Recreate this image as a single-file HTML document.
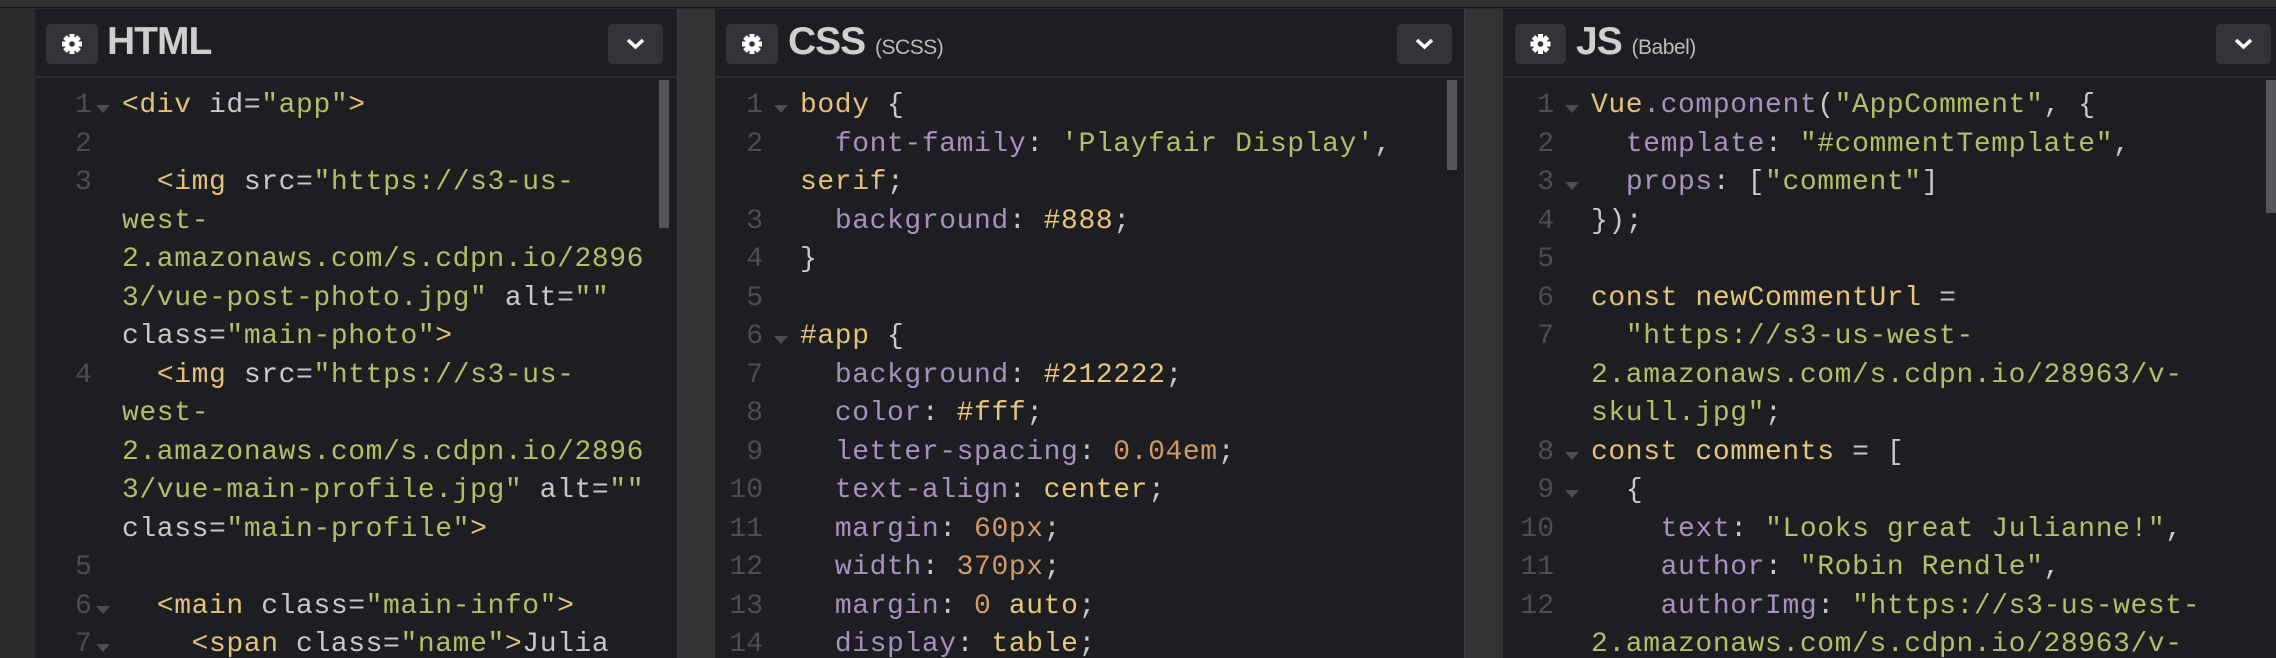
<!DOCTYPE html>
<html><head><meta charset="utf-8"><style>
*{margin:0;padding:0;box-sizing:border-box}
body{width:2276px;height:658px;overflow:hidden;background:#2b2b2e;position:relative;font-family:"Liberation Sans",sans-serif}
.top{position:absolute;left:0;top:0;width:2276px;height:8px;background:#333336;border-bottom:1px solid #111}
.panel{position:absolute;top:9px;height:649px;background:#1d1e22;overflow:hidden}
.div{position:absolute;top:9px;height:649px;background:#333336;border-left:1px solid #3c3c40}
.hdr{position:absolute;left:0;right:0;top:0;height:69px;border-bottom:2px solid #2a2b2f}
.btn{position:absolute;top:15px;height:40px;background:#333438;border-radius:5px}
.title{position:absolute;top:11px;color:#cfcfcf;font-weight:bold;font-size:39px;letter-spacing:-1px}
.title small{font-weight:normal;font-size:21px;letter-spacing:-0.5px;color:#bbb}
.code{position:absolute;top:78px;left:0;right:0;font-family:"Liberation Mono",monospace;font-size:28px;letter-spacing:0.6px;line-height:38.5px}
.row{height:38.5px;white-space:pre;position:relative}
.ln{position:absolute;text-align:right;color:#4d4d52;letter-spacing:0}
.fold{position:absolute;top:18px;width:0;height:0;border-left:7px solid transparent;border-right:7px solid transparent;border-top:8px solid #4d4d52}
.t{color:#e5c07b}.a{color:#c8c8c8}.s{color:#b5bd68}.p{color:#a890c0}.n{color:#d19a66}.w{color:#c8c8c8}.y{color:#e8c57d}
.sb{position:absolute;width:10px;background:#56565a}
</style></head><body>
<div class="top"></div>

<!-- panel 1 -->
<div class="panel" style="left:35px;width:642px">
 <div class="hdr">
  <div class="btn" style="left:11px;width:52px"><svg width="52" height="40" viewBox="0 0 52 40"><g transform="translate(26,20)" fill="#fff"><circle r="7"/><g id="t"><rect x="-2.5" y="-10" width="5" height="20"/><rect x="-2.5" y="-10" width="5" height="20" transform="rotate(45)"/><rect x="-2.5" y="-10" width="5" height="20" transform="rotate(90)"/><rect x="-2.5" y="-10" width="5" height="20" transform="rotate(135)"/></g><circle r="2.8" fill="#333438"/></g></svg></div>
  <div class="title" style="left:72px">HTML</div>
  <div class="btn" style="left:573px;width:55px"><svg width="55" height="40" viewBox="0 0 55 40"><path d="M20 16 L27.5 23 L35 16" stroke="#fff" stroke-width="3.5" fill="none"/></svg></div>
 </div>
 <div class="sb" style="left:624px;top:71px;height:148px"></div>
 <div class="code" style="padding-left:87px">
  <div class="row"><span class="ln" style="left:-47px;width:10px">1</span><span class="fold" style="left:-26px"></span><span class="t">&lt;div</span> <span class="a">id=</span><span class="s">"app"</span><span class="t">&gt;</span></div>
  <div class="row"><span class="ln" style="left:-47px;width:10px">2</span></div>
  <div class="row"><span class="ln" style="left:-47px;width:10px">3</span>  <span class="t">&lt;img</span> <span class="a">src=</span><span class="s">"https://s3-us-</span></div>
  <div class="row"><span class="s">west-</span></div>
  <div class="row"><span class="s">2.amazonaws.com/s.cdpn.io/2896</span></div>
  <div class="row"><span class="s">3/vue-post-photo.jpg"</span> <span class="a">alt=</span><span class="s">""</span></div>
  <div class="row"><span class="a">class=</span><span class="s">"main-photo"</span><span class="t">&gt;</span></div>
  <div class="row"><span class="ln" style="left:-47px;width:10px">4</span>  <span class="t">&lt;img</span> <span class="a">src=</span><span class="s">"https://s3-us-</span></div>
  <div class="row"><span class="s">west-</span></div>
  <div class="row"><span class="s">2.amazonaws.com/s.cdpn.io/2896</span></div>
  <div class="row"><span class="s">3/vue-main-profile.jpg"</span> <span class="a">alt=</span><span class="s">""</span></div>
  <div class="row"><span class="a">class=</span><span class="s">"main-profile"</span><span class="t">&gt;</span></div>
  <div class="row"><span class="ln" style="left:-47px;width:10px">5</span></div>
  <div class="row"><span class="ln" style="left:-47px;width:10px">6</span><span class="fold" style="left:-26px"></span>  <span class="t">&lt;main</span> <span class="a">class=</span><span class="s">"main-info"</span><span class="t">&gt;</span></div>
  <div class="row"><span class="ln" style="left:-47px;width:10px">7</span><span class="fold" style="left:-26px"></span>    <span class="t">&lt;span</span> <span class="a">class=</span><span class="s">"name"</span><span class="t">&gt;</span><span class="a">Julia</span></div>
 </div>
</div>
<div class="div" style="left:677px;width:38px"></div>

<!-- panel 2 -->
<div class="panel" style="left:715px;width:749px">
 <div class="hdr">
  <div class="btn" style="left:11px;width:52px"><svg width="52" height="40" viewBox="0 0 52 40"><g transform="translate(26,20)" fill="#fff"><circle r="7"/><rect x="-2.5" y="-10" width="5" height="20"/><rect x="-2.5" y="-10" width="5" height="20" transform="rotate(45)"/><rect x="-2.5" y="-10" width="5" height="20" transform="rotate(90)"/><rect x="-2.5" y="-10" width="5" height="20" transform="rotate(135)"/><circle r="2.8" fill="#333438"/></g></svg></div>
  <div class="title" style="left:73px">CSS <small>(SCSS)</small></div>
  <div class="btn" style="left:682px;width:55px"><svg width="55" height="40" viewBox="0 0 55 40"><path d="M20 16 L27.5 23 L35 16" stroke="#fff" stroke-width="3.5" fill="none"/></svg></div>
 </div>
 <div class="sb" style="left:732px;top:71px;height:90px"></div>
 <div class="code" style="padding-left:85px">
  <div class="row"><span class="ln" style="left:-55px;width:18px">1</span><span class="fold" style="left:-26px"></span><span class="t">body</span> <span class="w">{</span></div>
  <div class="row"><span class="ln" style="left:-55px;width:18px">2</span>  <span class="p">font-family</span><span class="w">:</span> <span class="s">'Playfair Display'</span><span class="w">,</span></div>
  <div class="row"><span class="t">serif</span><span class="w">;</span></div>
  <div class="row"><span class="ln" style="left:-55px;width:18px">3</span>  <span class="p">background</span><span class="w">:</span> <span class="y">#888</span><span class="w">;</span></div>
  <div class="row"><span class="ln" style="left:-55px;width:18px">4</span><span class="w">}</span></div>
  <div class="row"><span class="ln" style="left:-55px;width:18px">5</span></div>
  <div class="row"><span class="ln" style="left:-55px;width:18px">6</span><span class="fold" style="left:-26px"></span><span class="t">#app</span> <span class="w">{</span></div>
  <div class="row"><span class="ln" style="left:-55px;width:18px">7</span>  <span class="p">background</span><span class="w">:</span> <span class="y">#212222</span><span class="w">;</span></div>
  <div class="row"><span class="ln" style="left:-55px;width:18px">8</span>  <span class="p">color</span><span class="w">:</span> <span class="y">#fff</span><span class="w">;</span></div>
  <div class="row"><span class="ln" style="left:-55px;width:18px">9</span>  <span class="p">letter-spacing</span><span class="w">:</span> <span class="n">0.04em</span><span class="w">;</span></div>
  <div class="row"><span class="ln" style="left:-72px;width:35px">10</span>  <span class="p">text-align</span><span class="w">:</span> <span class="y">center</span><span class="w">;</span></div>
  <div class="row"><span class="ln" style="left:-72px;width:35px">11</span>  <span class="p">margin</span><span class="w">:</span> <span class="n">60px</span><span class="w">;</span></div>
  <div class="row"><span class="ln" style="left:-72px;width:35px">12</span>  <span class="p">width</span><span class="w">:</span> <span class="n">370px</span><span class="w">;</span></div>
  <div class="row"><span class="ln" style="left:-72px;width:35px">13</span>  <span class="p">margin</span><span class="w">:</span> <span class="n">0</span> <span class="y">auto</span><span class="w">;</span></div>
  <div class="row"><span class="ln" style="left:-72px;width:35px">14</span>  <span class="p">display</span><span class="w">:</span> <span class="y">table</span><span class="w">;</span></div>
 </div>
</div>
<div class="div" style="left:1464px;width:39px"></div>

<!-- panel 3 -->
<div class="panel" style="left:1503px;width:773px">
 <div class="hdr">
  <div class="btn" style="left:12px;width:51px"><svg width="51" height="40" viewBox="0 0 51 40"><g transform="translate(25.5,20)" fill="#fff"><circle r="7"/><rect x="-2.5" y="-10" width="5" height="20"/><rect x="-2.5" y="-10" width="5" height="20" transform="rotate(45)"/><rect x="-2.5" y="-10" width="5" height="20" transform="rotate(90)"/><rect x="-2.5" y="-10" width="5" height="20" transform="rotate(135)"/><circle r="2.8" fill="#333438"/></g></svg></div>
  <div class="title" style="left:73px">JS <small>(Babel)</small></div>
  <div class="btn" style="left:713px;width:55px"><svg width="55" height="40" viewBox="0 0 55 40"><path d="M20 16 L27.5 23 L35 16" stroke="#fff" stroke-width="3.5" fill="none"/></svg></div>
 </div>
 <div class="sb" style="left:763px;top:71px;height:133px"></div>
 <div class="code" style="padding-left:88px">
  <div class="row"><span class="ln" style="left:-55px;width:18px">1</span><span class="fold" style="left:-26px"></span><span class="t">Vue</span><span class="p">.component</span><span class="w">(</span><span class="s">"AppComment"</span><span class="w">, {</span></div>
  <div class="row"><span class="ln" style="left:-55px;width:18px">2</span>  <span class="p">template</span><span class="w">:</span> <span class="s">"#commentTemplate"</span><span class="w">,</span></div>
  <div class="row"><span class="ln" style="left:-55px;width:18px">3</span><span class="fold" style="left:-26px"></span>  <span class="p">props</span><span class="w">: [</span><span class="s">"comment"</span><span class="w">]</span></div>
  <div class="row"><span class="ln" style="left:-55px;width:18px">4</span><span class="w">});</span></div>
  <div class="row"><span class="ln" style="left:-55px;width:18px">5</span></div>
  <div class="row"><span class="ln" style="left:-55px;width:18px">6</span><span class="t">const</span> <span class="y">newCommentUrl</span> <span class="w">=</span></div>
  <div class="row"><span class="ln" style="left:-55px;width:18px">7</span>  <span class="s">"https://s3-us-west-</span></div>
  <div class="row"><span class="s">2.amazonaws.com/s.cdpn.io/28963/v-</span></div>
  <div class="row"><span class="s">skull.jpg"</span><span class="w">;</span></div>
  <div class="row"><span class="ln" style="left:-55px;width:18px">8</span><span class="fold" style="left:-26px"></span><span class="t">const</span> <span class="y">comments</span> <span class="w">= [</span></div>
  <div class="row"><span class="ln" style="left:-55px;width:18px">9</span><span class="fold" style="left:-26px"></span>  <span class="w">{</span></div>
  <div class="row"><span class="ln" style="left:-72px;width:35px">10</span>    <span class="p">text</span><span class="w">:</span> <span class="s">"Looks great Julianne!"</span><span class="w">,</span></div>
  <div class="row"><span class="ln" style="left:-72px;width:35px">11</span>    <span class="p">author</span><span class="w">:</span> <span class="s">"Robin Rendle"</span><span class="w">,</span></div>
  <div class="row"><span class="ln" style="left:-72px;width:35px">12</span>    <span class="p">authorImg</span><span class="w">:</span> <span class="s">"https://s3-us-west-</span></div>
  <div class="row"><span class="s">2.amazonaws.com/s.cdpn.io/28963/v-</span></div>
 </div>
</div>
</body></html>
